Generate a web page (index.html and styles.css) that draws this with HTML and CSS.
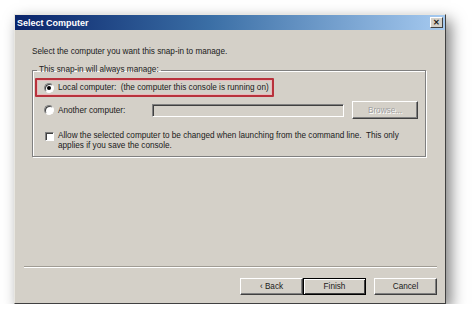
FILE: index.html
```html
<!DOCTYPE html>
<html lang="en">
<head>
  <meta charset="UTF-8">
  <title>Select Computer</title>
  <link rel="stylesheet" href="styles.css">
</head>
<body>

<div class="dialog">
  <div class="titlebar">
    <span class="title">Select Computer</span>
    <span class="close">&#x2715;</span>
  </div>

  <div class="content">
    <p class="intro">Select the computer you want this snap-in to manage.</p>

    <fieldset class="group">
      <legend>This snap-in will always manage:</legend>

      <div class="row highlight">
        <span class="radio checked"></span>
        <span>Local computer:&nbsp; (the computer this console is running on)</span>
      </div>

      <div class="row another">
        <span class="radio"></span>
        <span class="another-label">Another computer:</span>
        <span class="textbox"></span>
        <span class="button disabled browse">Browse...</span>
      </div>

      <div class="row check">
        <span class="checkbox"></span>
        <span class="check-text">Allow the selected computer to be changed when launching from the command line.&nbsp; This only applies if you save the console.</span>
      </div>
    </fieldset>
  </div>

  <div class="footer">
    <div class="separator"></div>
    <div class="buttons">
      <span class="button">&lsaquo; Back</span>
      <span class="button default">Finish</span>
      <span class="button cancel">Cancel</span>
    </div>
  </div>
</div>

</body>
</html>
```

FILE: styles.css
```css
body {
  margin: 0;
  background: #ffffff;
  font-family: 'Liberation Sans', Arial, sans-serif;
  font-size: 8.2px;
  color: #1a1a1a;
}
.dialog {
  margin: 14px 0 0 14px;
  width: 430px;
  height: 288px;
  background: #d4d0c8;
  border: 1px solid;
  border-color: #e8e6e0 #404040 #404040 #e8e6e0;
  box-shadow: 5px 6px 14px rgba(0,0,0,0.5);
  display: flex;
  flex-direction: column;
}
.titlebar {
  height: 15px;
  background: linear-gradient(90deg, #0a246a, #3a6ea5 45%, #a6caf0);
  display: flex;
  align-items: center;
  justify-content: space-between;
  padding: 0 2px 0 2px;
}
.title {
  color: #ffffff;
  font-weight: bold;
  font-size: 9px;
}
.close {
  width: 13px;
  height: 11px;
  background: #d4d0c8;
  border: 1px solid;
  border-color: #ffffff #404040 #404040 #ffffff;
  box-sizing: border-box;
  font-size: 8px;
  font-weight: bold;
  line-height: 9px;
  text-align: center;
}
.content {
  flex: 1;
  padding: 16px 0 0 17px;
}
.intro {
  margin: 0 0 6px 0;
  line-height: 12px;
}
.group {
  width: 392px;
  margin: 0;
  padding: 0 0 5px 0;
  border: 1px solid #808080;
  box-shadow: 1px 1px 0 #ffffff, inset 1px 1px 0 #ffffff;
}
.group legend {
  margin-left: 4px;
  padding: 0 2px;
  line-height: 12px;
  color: #222222;
}
.row {
  display: flex;
  align-items: center;
}
.highlight {
  width: fit-content;
  height: 15px;
  margin: 2px 0 0 2px;
  border: 2px solid #b8323c;
  border-radius: 1px;
  box-shadow: inset 0 0 0 1px #e9b9bc;
  padding: 0 3px 0 7px;
}
.radio {
  width: 8px;
  height: 8px;
  border-radius: 50%;
  background: #ffffff;
  border: 1px solid;
  border-color: #808080 #ffffff #ffffff #808080;
  box-shadow: inset 1px 1px 0 #404040;
  margin-right: 4px;
  position: relative;
}
.radio.checked::after {
  content: "";
  position: absolute;
  left: 2px;
  top: 2px;
  width: 4px;
  height: 4px;
  border-radius: 50%;
  background: #000000;
}
.another {
  margin: 4px 0 0 11px;
  height: 18px;
}
.another-label {
  width: 94px;
}
.textbox {
  width: 190px;
  height: 11px;
  background: #d4d0c8;
  border: 1px solid;
  border-color: #808080 #ffffff #ffffff #808080;
  box-shadow: inset 1px 1px 0 #404040;
}
.button {
  display: flex;
  align-items: center;
  justify-content: center;
  box-sizing: border-box;
  width: 63px;
  height: 17px;
  border: 1px solid;
  border-color: #ffffff #404040 #404040 #ffffff;
  box-shadow: inset -1px -1px 0 #808080;
  background: #d4d0c8;
}
.browse {
  width: 66px;
  height: 18px;
  margin-left: 8px;
}
.disabled {
  color: #a0a0a0;
  text-shadow: 1px 1px 0 #ffffff;
}
.check {
  align-items: flex-start;
  margin: 12px 0 0 12px;
}
.checkbox {
  flex: none;
  width: 7px;
  height: 7px;
  background: #ffffff;
  border: 1px solid;
  border-color: #808080 #ffffff #ffffff #808080;
  box-shadow: inset 1px 1px 0 #404040;
  margin: 1px 4px 0 0;
}
.check-text {
  width: 348px;
  line-height: 10px;
}
.footer {
  padding: 0 8px 8px 9px;
}
.separator {
  height: 1px;
  background: #a09c94;
  border-bottom: 1px solid #ffffff;
  margin-bottom: 10px;
}
.buttons {
  display: flex;
  justify-content: flex-end;
}
.default {
  border: 1px solid #000000;
  box-shadow: inset 1px 1px 0 #ffffff, inset -1px -1px 0 #404040;
}
.cancel {
  margin-left: 8px;
}
```
